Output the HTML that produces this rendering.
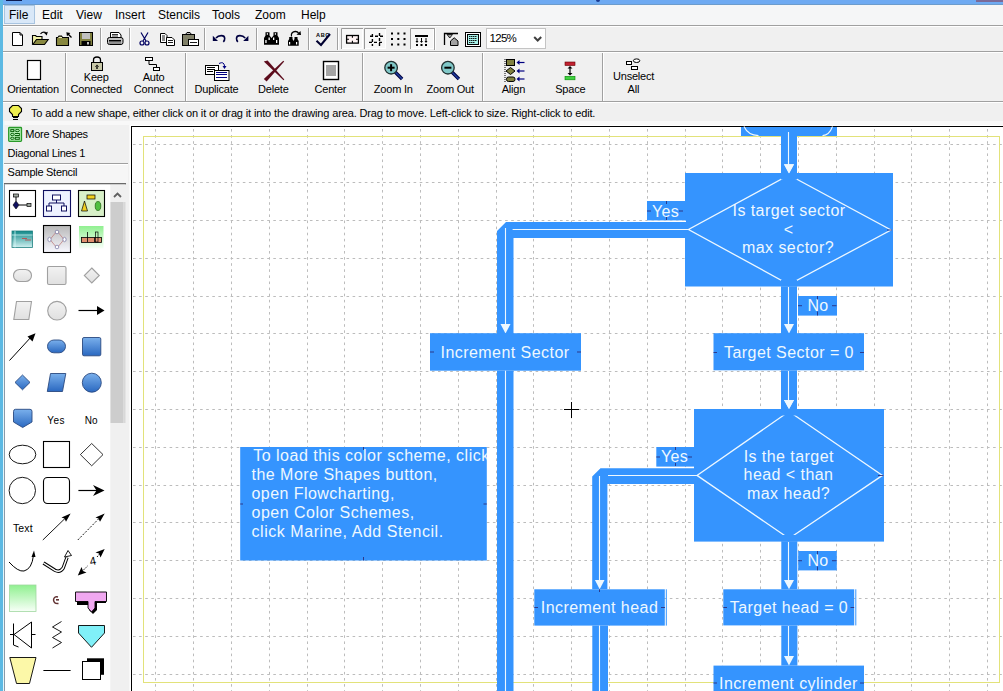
<!DOCTYPE html>
<html><head><meta charset="utf-8">
<style>
*{margin:0;padding:0;box-sizing:border-box}
html,body{width:1003px;height:691px;overflow:hidden;background:#f0f0f0;font-family:"Liberation Sans",sans-serif;color:#000}
.a{position:absolute}
.t{position:absolute;white-space:nowrap;font-size:12px;line-height:14px}
</style></head><body>
<!-- window frame -->
<div class="a" style="left:0;top:0;width:1003px;height:5px;background:#6eaaf2"></div>
<div class="a" style="left:0;top:4px;width:1003px;height:1px;background:#6c9ccc"></div>
<div class="a" style="left:976px;top:0;width:27px;height:2px;background:#7a6a98"></div>
<div class="a" style="left:596px;top:0;width:4px;height:2px;background:#1a3a90;border-radius:0 0 2px 2px"></div>
<div class="a" style="left:6px;top:0;width:16px;height:1px;background:#0a1a50"></div>
<div class="a" style="left:0;top:0;width:3px;height:691px;background:#5cb9e3"></div>
<!-- menu bar -->
<div class="a" style="left:3px;top:5px;width:1000px;height:20px;background:#f5f6f7"></div>
<div class="a" style="left:4px;top:5px;width:31px;height:19px;background:#d9e8f8;border:1px solid #a8c4e0"></div>
<div class="a" style="left:3px;top:25px;width:1000px;height:1px;background:#a0a0a0"></div>
<div class="a" style="left:3px;top:26px;width:1000px;height:1px;background:#ffffff"></div>
<div class="t" style="left:9px;top:8px">File</div>
<div class="t" style="left:42px;top:8px">Edit</div>
<div class="t" style="left:76px;top:8px">View</div>
<div class="t" style="left:115px;top:8px">Insert</div>
<div class="t" style="left:158px;top:8px">Stencils</div>
<div class="t" style="left:212px;top:8px">Tools</div>
<div class="t" style="left:255px;top:8px">Zoom</div>
<div class="t" style="left:301px;top:8px">Help</div>
<!-- toolbar 1 lines -->
<div class="a" style="left:3px;top:51px;width:1000px;height:1px;background:#a0a0a0"></div>
<div class="a" style="left:3px;top:52px;width:1000px;height:1px;background:#ffffff"></div>
<!-- toolbar 2 lines -->
<div class="a" style="left:3px;top:101px;width:1000px;height:1px;background:#a0a0a0"></div>
<div class="a" style="left:3px;top:102px;width:1000px;height:1px;background:#ffffff"></div>
<svg class="a" style="left:0;top:0" width="1003" height="125" viewBox="0 0 1003 125" font-family="Liberation Sans">
<rect x="100" y="28" width="1" height="22" fill="#a0a0a0"/><rect x="101" y="28" width="1" height="22" fill="#fff"/>
<rect x="129" y="28" width="1" height="22" fill="#a0a0a0"/><rect x="130" y="28" width="1" height="22" fill="#fff"/>
<rect x="204" y="28" width="1" height="22" fill="#a0a0a0"/><rect x="205" y="28" width="1" height="22" fill="#fff"/>
<rect x="256" y="28" width="1" height="22" fill="#a0a0a0"/><rect x="257" y="28" width="1" height="22" fill="#fff"/>
<rect x="308" y="28" width="1" height="22" fill="#a0a0a0"/><rect x="309" y="28" width="1" height="22" fill="#fff"/>
<rect x="337" y="28" width="1" height="22" fill="#a0a0a0"/><rect x="338" y="28" width="1" height="22" fill="#fff"/>
<rect x="434" y="28" width="1" height="22" fill="#a0a0a0"/><rect x="435" y="28" width="1" height="22" fill="#fff"/>
<rect x="341" y="28" width="22" height="21" fill="#f7f7f7"/>
<path d="M341.5,49 V28.5 H363" stroke="#9a9a9a" fill="none"/>
<path d="M342,48.5 H362.5 V29" stroke="#ffffff" fill="none"/>
<rect x="364" y="28" width="22" height="21" fill="#f7f7f7"/>
<path d="M364.5,49 V28.5 H386" stroke="#9a9a9a" fill="none"/>
<path d="M365,48.5 H385.5 V29" stroke="#ffffff" fill="none"/>
<rect x="410" y="28" width="24" height="21" fill="#f7f7f7"/>
<path d="M410.5,49 V28.5 H434" stroke="#9a9a9a" fill="none"/>
<path d="M411,48.5 H433.5 V29" stroke="#ffffff" fill="none"/>
<path d="M12.5,32.5 H20 L22.5,35 V45.5 H12.5 Z" fill="#fff" stroke="#000"/><path d="M20,32.5 V35 H22.5" fill="none" stroke="#000"/>
<path d="M32.5,44.5 V35.5 H35.5 L36.5,36.5 H42 V39.5" fill="#f0f0a8" stroke="#000" stroke-width="1.1"/>
<path d="M32.8,44.5 L36.5,39.5 H48.2 L44.5,44.5 Z" fill="#888840" stroke="#000" stroke-width="1.1"/>
<path d="M40.5,33.8 Q43,31.2 45.8,32.6" fill="none" stroke="#000" stroke-width="1.2"/><path d="M44.2,33 L47.8,31.8 L46.8,35.5 Z" fill="#000"/>
<path d="M56.5,45.5 V37.5 H58 L59,36 H61.5 L62.5,37.5 H68.5 V45.5 Z" fill="#888840" stroke="#000" stroke-width="1.1"/><rect x="58.5" y="37" width="3.5" height="1" fill="#f0f0c0"/>
<path d="M71.5,37.5 L67.8,33.8" stroke="#000" stroke-width="1.3" fill="none"/><path d="M66.3,32.3 L70.3,33 L67,36.3 Z" fill="#000"/>
<rect x="79.5" y="32.5" width="13" height="13" fill="#808040" stroke="#000"/><rect x="82" y="33" width="8" height="6" fill="#c0c0c0"/><rect x="81.5" y="41" width="9" height="4.5" fill="#000"/><rect x="87" y="42" width="2" height="2.5" fill="#c0c0c0"/>
<path d="M110.5,32.5 H119 L121,35 V37.5 H110.5 Z" fill="#fff" stroke="#000"/><path d="M112,34.5 H118 M112,36 H118" stroke="#000" stroke-width="0.8"/>
<rect x="107.5" y="37.5" width="15.5" height="7" rx="2" fill="#c0c0c0" stroke="#000"/><rect x="109" y="40" width="12" height="1.5" fill="#000"/><rect x="109" y="42.5" width="12" height="1" fill="#606060"/>
<path d="M141,32.5 L146,41 M148,32.5 L143,41" stroke="#000060" stroke-width="1.2" fill="none"/><circle cx="142" cy="43" r="2" fill="none" stroke="#000060" stroke-width="1.2"/><circle cx="147" cy="43" r="2" fill="none" stroke="#000060" stroke-width="1.2"/>
<path d="M160.5,33.5 H165 L167,35.5 V42.5 H160.5 Z" fill="#fff" stroke="#000"/><path d="M162,36 H165 M162,38 H165 M162,40 H165" stroke="#000" stroke-width="0.9"/>
<path d="M166.5,37.5 H172 L174.5,40 V45.5 H166.5 Z" fill="#fff" stroke="#000"/><path d="M168,40.5 H173 M168,42.5 H173" stroke="#000" stroke-width="0.9"/>
<rect x="182.5" y="34.5" width="12" height="11" fill="#808068" stroke="#000"/><path d="M185.5,34.5 L187,32.5 H190 L191.5,34.5 Z" fill="#c0c0c0" stroke="#000"/>
<rect x="188.5" y="39.5" width="10" height="6" fill="#fff" stroke="#000"/><path d="M190,42.5 H197" stroke="#000" stroke-width="0.9"/>
<path d="M216,38 C218.5,35 224.5,34.5 224.7,38.3 C224.8,39.8 224.2,41 223.3,41.8" fill="none" stroke="#000040" stroke-width="1.6"/><path d="M212.8,35.8 V41 H218 Z" fill="#000040"/>
<path d="M245.2,38 C242.7,35 236.7,34.5 236.5,38.3 C236.4,39.8 237,41 237.9,41.8" fill="none" stroke="#000040" stroke-width="1.6"/><path d="M248.4,35.8 V41 H243.2 Z" fill="#000040"/>
<path d="M264,44.7 V38 L265.5,35.5 V32.3 H269.5 V35.5 L271.5,38 V44.7 Z M271.5,44.7 V38 L273.5,35.5 V32.3 H277.5 V35.5 L279,38 V44.7 Z" fill="#000"/>
<rect x="265.3" y="40" width="1.3" height="3" fill="#fff"/><rect x="268.5" y="37.5" width="1.3" height="2.5" fill="#fff"/><rect x="273" y="37.5" width="1.3" height="2.5" fill="#fff"/><rect x="276" y="40" width="1.3" height="3" fill="#fff"/><rect x="266.8" y="33.2" width="1.2" height="1.5" fill="#fff"/><rect x="274.8" y="33.2" width="1.2" height="1.5" fill="#fff"/>
<path d="M288,45.7 V41 L289.2,39 V37 H292.5 V39 L293.5,41 V45.7 Z M293.5,45.7 V41 L294.5,39 V37 H297.5 V39 L298.7,41 V45.7 Z" fill="#000"/>
<rect x="289" y="42" width="1.2" height="2.5" fill="#fff"/><rect x="296" y="42" width="1.2" height="2.5" fill="#fff"/>
<path d="M291.5,36.5 C290.5,33.5 293,31.3 295.5,31.5 C297,31.6 298,32.3 298.5,33" fill="none" stroke="#000" stroke-width="1.3"/><path d="M296.5,34.8 L301,35 L300.5,31 Z" fill="#000"/>
<text x="316" y="36.6" font-size="5.6" font-weight="bold" letter-spacing="0.6" fill="#000">ABC</text>
<path d="M316.5,40.8 L321,45 L330,34" fill="none" stroke="#000030" stroke-width="2.1"/>
<rect x="346.6" y="35.5" width="11.8" height="7.6" fill="#fff4f4" stroke="#000" stroke-width="1.3"/><path d="M352.4,35.5 V37.8 M352.4,40.8 V43 M346.6,39.3 H349 M356,39.3 H358.4" stroke="#000" stroke-width="1.1"/>
<path d="M370,36.2 H372.5 M375,36.2 H378 M380,36.2 H383 M369,42.4 H372 M374,42.4 H377 M379,42.4 H382 M372.4,34 V37 M372.4,39 V42 M372.4,44 V46 M379.5,33 V36 M379.5,38 V41 M379.5,43 V46" stroke="#000" stroke-width="1.4" fill="none"/>
<rect x="391" y="32.5" width="2" height="2" fill="#000"/>
<rect x="397.3" y="32.5" width="2" height="2" fill="#000"/>
<rect x="403.5" y="32.5" width="2" height="2" fill="#000"/>
<rect x="391" y="38" width="2" height="2" fill="#000"/>
<rect x="397.3" y="38" width="2" height="2" fill="#000"/>
<rect x="403.5" y="38" width="2" height="2" fill="#000"/>
<rect x="391" y="43.5" width="2" height="2" fill="#000"/>
<rect x="397.3" y="43.5" width="2" height="2" fill="#000"/>
<rect x="403.5" y="43.5" width="2" height="2" fill="#000"/>
<rect x="415" y="35" width="13" height="2" fill="#000"/>
<path d="M417,38 V42" stroke="#000" stroke-width="1"/><path d="M415.5,41 L418.5,41 L417,43 Z" fill="#000"/><rect x="416" y="44" width="2" height="2" fill="#000"/>
<path d="M421.5,38 V42" stroke="#000" stroke-width="1"/><path d="M420.0,41 L423.0,41 L421.5,43 Z" fill="#000"/><rect x="420.5" y="44" width="2" height="2" fill="#000"/>
<path d="M426,38 V42" stroke="#000" stroke-width="1"/><path d="M424.5,41 L427.5,41 L426,43 Z" fill="#000"/><rect x="425" y="44" width="2" height="2" fill="#000"/>
<path d="M444.5,45 V33.5 H458" fill="none" stroke="#000" stroke-width="1.3"/><path d="M447,34.5 L452.5,34.5 L449.8,38 Z" fill="#a0a0a0" stroke="#000" stroke-width="0.8"/><path d="M450.5,45.5 V41 L454.2,37.8 L458,41 V45.5 Z" fill="#a0a0a0" stroke="#000" stroke-width="1"/>
<rect x="465.5" y="32.5" width="15" height="14" fill="#fff" stroke="#000"/><rect x="467.5" y="34.5" width="11" height="10" fill="#a8f0e8" stroke="#000" stroke-width="1"/><path d="M469,36.5 H477 M469,38.5 H477 M469,40.5 H477 M469,42.5 H475" stroke="#000" stroke-width="0.9" stroke-dasharray="1.5 0.5"/>
<rect x="486.5" y="28.5" width="59" height="20" fill="#fff" stroke="#c4c4c4"/>
<text x="489.5" y="41.8" font-size="11.5" text-anchor="start" letter-spacing="-0.7" fill="#000">125%</text>
<path d="M534.2,37 L537.7,40.5 L541.2,37" fill="none" stroke="#404040" stroke-width="2"/>
<rect x="65" y="53" width="1" height="48" fill="#a0a0a0"/><rect x="66" y="53" width="1" height="48" fill="#fff"/>
<rect x="185" y="53" width="1" height="48" fill="#a0a0a0"/><rect x="186" y="53" width="1" height="48" fill="#fff"/>
<rect x="362" y="53" width="1" height="48" fill="#a0a0a0"/><rect x="363" y="53" width="1" height="48" fill="#fff"/>
<rect x="482" y="53" width="1" height="48" fill="#a0a0a0"/><rect x="483" y="53" width="1" height="48" fill="#fff"/>
<rect x="602" y="53" width="1" height="48" fill="#a0a0a0"/><rect x="603" y="53" width="1" height="48" fill="#fff"/>
<rect x="27.5" y="60.5" width="13" height="19" fill="#fff" stroke="#000" stroke-width="1.2"/>
<text x="33" y="92.8" font-size="11" text-anchor="middle" letter-spacing="-0.2" fill="#000">Orientation</text>
<path d="M93.5,63 V60 Q93.5,57 97,57 Q100.5,57 100.5,60 V63" fill="none" stroke="#000" stroke-width="1.3"/>
<rect x="91.5" y="62.5" width="11" height="8" fill="#c8c8a8" stroke="#000"/><path d="M97,64.5 L95,67 H99 Z M96.3,66.5 H97.7 V69 H96.3 Z" fill="#000"/>
<text x="96.2" y="81.4" font-size="11" text-anchor="middle" letter-spacing="-0.2" fill="#000">Keep</text>
<text x="96.2" y="92.7" font-size="11" text-anchor="middle" letter-spacing="-0.2" fill="#000">Connected</text>
<rect x="145.5" y="57.5" width="7" height="3" fill="#fff" stroke="#000"/><rect x="153.5" y="67.5" width="6" height="3" fill="#fff" stroke="#000"/><path d="M149,61 V64.5 H156.5 V67.5" fill="none" stroke="#000"/>
<text x="153.6" y="81.4" font-size="11" text-anchor="middle" letter-spacing="-0.2" fill="#000">Auto</text>
<text x="153.6" y="92.7" font-size="11" text-anchor="middle" letter-spacing="-0.2" fill="#000">Connect</text>
<rect x="205.5" y="65.5" width="13" height="9" fill="#fff" stroke="#000"/><path d="M207,67.5 H215 M207,69.5 H215 M207,71.5 H213" stroke="#000" stroke-width="1"/>
<rect x="214.5" y="70.5" width="14.5" height="10" fill="#fff" stroke="#000"/><path d="M216,72.5 H227 M216,74.5 H227 M216,77.5 H227" stroke="#000080" stroke-width="1"/>
<path d="M219,63.5 Q224,61 224.5,66" fill="none" stroke="#000080"/><path d="M222.5,66 L226.5,66 L224.5,69 Z" fill="#000080"/>
<text x="216.5" y="92.7" font-size="11" text-anchor="middle" letter-spacing="-0.2" fill="#000">Duplicate</text>
<path d="M263.8,61.6 L267.6,60.6 L284.3,79.5 L283.5,80.3 Z" fill="#5c0c1c"/><path d="M263.8,79 L266.6,81.6 L284.2,61.6 L283.3,60.8 Z" fill="#5c0c1c"/>
<text x="273.3" y="92.7" font-size="11" text-anchor="middle" letter-spacing="-0.2" fill="#000">Delete</text>
<rect x="323.5" y="61.5" width="15" height="18" fill="#fff" stroke="#000" stroke-width="1.4"/><rect x="326" y="65" width="10" height="11" fill="#a4a4a4"/>
<text x="330.4" y="92.7" font-size="11" text-anchor="middle" letter-spacing="-0.2" fill="#000">Center</text>
<path d="M395.1,72 L402.1,79" stroke="#000040" stroke-width="3.4"/><path d="M395.1,72 L402.1,79" stroke="#2040a0" stroke-width="1.4"/>
<circle cx="391.1" cy="67.7" r="6.3" fill="#80c8c8" stroke="#203030" stroke-width="1.3"/>
<path d="M387.6,67.7 H394.6" stroke="#000" stroke-width="2"/>
<path d="M391.1,64.2 V71.2" stroke="#000" stroke-width="2"/>
<path d="M451.9,72 L458.9,79" stroke="#000040" stroke-width="3.4"/><path d="M451.9,72 L458.9,79" stroke="#2040a0" stroke-width="1.4"/>
<circle cx="447.9" cy="67.7" r="6.3" fill="#80c8c8" stroke="#203030" stroke-width="1.3"/>
<path d="M444.4,67.7 H451.4" stroke="#000" stroke-width="2"/>
<text x="393.3" y="92.7" font-size="11" text-anchor="middle" letter-spacing="-0.2" fill="#000">Zoom In</text>
<text x="450.2" y="92.7" font-size="11" text-anchor="middle" letter-spacing="-0.2" fill="#000">Zoom Out</text>
<path d="M505,59 V82" stroke="#000" stroke-dasharray="1 1"/>
<rect x="506.5" y="59.5" width="8" height="6" fill="#808040" stroke="#000"/><path d="M510.5,67.5 L515,71 L510.5,74.5 L506,71 Z" fill="#808040" stroke="#000"/><rect x="506.5" y="77" width="8.5" height="4.5" rx="2" fill="#808040" stroke="#000"/>
<path d="M518,62.5 H524.5" stroke="#000080" stroke-width="1.2"/><path d="M516.5,62.5 L519.5,60.0 V65.0 Z" fill="#000080"/>
<path d="M518,71 H524.5" stroke="#000080" stroke-width="1.2"/><path d="M516.5,71 L519.5,68.5 V73.5 Z" fill="#000080"/>
<path d="M518,79 H524.5" stroke="#000080" stroke-width="1.2"/><path d="M516.5,79 L519.5,76.5 V81.5 Z" fill="#000080"/>
<text x="513.4" y="92.7" font-size="11" text-anchor="middle" letter-spacing="-0.2" fill="#000">Align</text>
<rect x="565" y="62" width="10" height="3.5" fill="#c02030" stroke="#600" stroke-width="0.6"/><rect x="565" y="76.3" width="10" height="3.5" fill="#40d040" stroke="#080" stroke-width="0.6"/>
<path d="M570,67.5 V74" stroke="#000" stroke-width="1.2"/><path d="M567.5,68.5 L570,66 L572.5,68.5 Z M567.5,73 L570,75.5 L572.5,73 Z" fill="#000"/>
<text x="570.3" y="92.7" font-size="11" text-anchor="middle" letter-spacing="-0.2" fill="#000">Space</text>
<rect x="626.5" y="61.5" width="5" height="3" fill="#fff" stroke="#000"/><ellipse cx="636.6" cy="60.7" rx="3.2" ry="1.8" fill="#fff" stroke="#000"/><rect x="631.5" y="66.5" width="6" height="3" fill="#fff" stroke="#000"/>
<text x="633.6" y="80.3" font-size="11" text-anchor="middle" letter-spacing="-0.2" fill="#000">Unselect</text>
<text x="633.4" y="92.5" font-size="11" text-anchor="middle" letter-spacing="-0.2" fill="#000">All</text>
<path d="M12.5,105.5 H18.5 L21.5,108.5 V111.5 L18.5,114.5 V116.5 H12.5 V114.5 L9.5,111.5 V108.5 Z" fill="#eeee50" stroke="#000" stroke-width="1.1"/>
<path d="M13,117.5 H18 M13,119.5 H18" stroke="#000" stroke-width="1.2"/><path d="M13.5,118.5 H17.5" stroke="#e0e0e0" stroke-width="0.8"/>
</svg>
<!-- hint -->
<div class="a" style="left:3px;top:121px;width:1000px;height:5px;background:#f8f8f8"></div>
<div class="t" style="left:31px;top:106px;font-size:11px;letter-spacing:-0.14px">To add a new shape, either click on it or drag it into the drawing area. Drag to move. Left-click to size. Right-click to edit.</div>

<svg class="a" style="left:0;top:0" width="131" height="691" viewBox="0 0 131 691" font-family="Liberation Sans">
<rect x="3" y="121" width="128" height="4" fill="#f8f8f8"/>
<rect x="3" y="125" width="127" height="566" fill="#f0f0f0"/>
<rect x="3" y="121" width="1.5" height="570" fill="#e4f6fc"/>
<rect x="4" y="163" width="124" height="1" fill="#a0a0a0"/><rect x="4" y="164" width="124" height="1" fill="#fff"/>
<rect x="4" y="165" width="124" height="18" fill="#f6f6f6"/>
<rect x="4" y="183" width="122" height="1.5" fill="#6a6a6a"/>
<rect x="4" y="184" width="1" height="507" fill="#8a9aa8"/>
<rect x="5" y="184.5" width="105.5" height="507" fill="#fff"/>
<rect x="110.5" y="184.5" width="15" height="507" fill="#f0f0f0"/>
<rect x="129" y="121" width="2" height="570" fill="#f8f8f8"/>
<path d="M114,197 L117.5,193.5 L121,197" fill="none" stroke="#606060" stroke-width="1.8"/>
<rect x="110.5" y="202" width="13" height="221" fill="#cdcdcd"/><rect x="123.5" y="202" width="2" height="221" fill="#d8d8d8"/>
<rect x="8.7" y="127.5" width="12.8" height="13.8" rx="0.8" fill="#b4f0b4" stroke="#2a9a2a" stroke-width="1.3"/>
<rect x="10.8" y="129.6" width="3" height="2" fill="none" stroke="#0a600a" stroke-width="1"/><ellipse cx="17.3" cy="130.6" rx="2.2" ry="1.1" fill="none" stroke="#0a600a" stroke-width="1"/>
<ellipse cx="12.3" cy="134.5" rx="1.8" ry="1.1" fill="none" stroke="#0a600a" stroke-width="1"/><rect x="15.3" y="133.5" width="4" height="2" fill="none" stroke="#0a600a" stroke-width="1"/>
<ellipse cx="12.3" cy="138.3" rx="1.8" ry="1.1" fill="none" stroke="#0a600a" stroke-width="1"/><rect x="15.3" y="137.3" width="4" height="2" fill="none" stroke="#0a600a" stroke-width="1"/>
<text x="25.3" y="137.7" font-size="11" text-anchor="start" letter-spacing="-0.27" fill="#000">More Shapes</text>
<text x="7.6" y="156.5" font-size="11" text-anchor="start" letter-spacing="-0.27" fill="#000">Diagonal Lines 1</text>
<text x="7.6" y="175.5" font-size="11" text-anchor="start" letter-spacing="-0.27" fill="#000">Sample Stencil</text>
<rect x="9.5" y="190.5" width="26" height="26" fill="#fff" stroke="#000" stroke-width="1.1"/>
<rect x="13.5" y="194" width="5" height="3" fill="#a0a8a0" stroke="#000" stroke-width="0.7"/><path d="M16,197 V201" stroke="#000"/><path d="M16,201 L19,205 L16,209 L13,205 Z" fill="#101060" stroke="#000" stroke-width="0.6"/><path d="M19,205 H27" stroke="#000"/><rect x="27" y="203.5" width="4" height="3" fill="#a0a8a0" stroke="#000" stroke-width="0.7"/>
<rect x="43.5" y="190.5" width="27" height="26" fill="#eef2ff" stroke="#101060" stroke-width="1.1"/>
<rect x="52.5" y="195" width="8" height="5" fill="#fff" stroke="#101060"/><path d="M56.5,200 V203 M49,206 V203 H64 V206" fill="none" stroke="#101060"/><rect x="46.5" y="206" width="5" height="5" fill="#fff" stroke="#101060"/><rect x="61.5" y="206" width="5" height="5" fill="#fff" stroke="#101060"/>
<rect x="78.5" y="190.5" width="26" height="26" fill="#d8f0c8" stroke="#000" stroke-width="1.1"/>
<rect x="87" y="195" width="8" height="4" fill="#f0d020" stroke="#000" stroke-width="0.7"/><path d="M84.5,201 L87.5,211 H81.5 Z" fill="#f0d020" stroke="#000" stroke-width="0.7"/><ellipse cx="98" cy="206" rx="2.8" ry="4.5" fill="#50c040" stroke="#206010" stroke-width="0.7"/>
<defs><linearGradient id="tg" x1="0" y1="0" x2="0" y2="1"><stop offset="0" stop-color="#108888"/><stop offset="1" stop-color="#d0f0f0"/></linearGradient><linearGradient id="gg" x1="0" y1="0" x2="0" y2="1"><stop offset="0" stop-color="#b8b8b8"/><stop offset="1" stop-color="#f8f8ff"/></linearGradient><linearGradient id="lg" x1="0" y1="0" x2="0" y2="1"><stop offset="0" stop-color="#90f090"/><stop offset="1" stop-color="#f8fff8"/></linearGradient><linearGradient id="bg" x1="0" y1="0" x2="0" y2="1"><stop offset="0" stop-color="#7ab0ec"/><stop offset="1" stop-color="#2a68c0"/></linearGradient><linearGradient id="gsh" x1="0" y1="0" x2="0" y2="1"><stop offset="0" stop-color="#f2f2f2"/><stop offset="1" stop-color="#e0e0e0"/></linearGradient></defs>
<rect x="12" y="231" width="20.5" height="16.5" fill="url(#tg)" stroke="#208080" stroke-width="0.8"/><path d="M12,235 H32.5 M15,231 V247.5" stroke="#e0ffff" stroke-width="0.7"/><path d="M22,238.5 H27 M25,240 H31" stroke="#c04040" stroke-width="0.8"/>
<rect x="43.5" y="225.5" width="27" height="27" fill="url(#gg)" stroke="#000" stroke-width="1.1"/><path d="M57,231 L64,239.5 L57,248 L50,239.5 Z" fill="none" stroke="#c08080" stroke-width="0.8"/><circle cx="57" cy="232" r="1.8" fill="#fff" stroke="#404080" stroke-width="0.5"/><circle cx="57" cy="247" r="1.8" fill="#fff" stroke="#404080" stroke-width="0.5"/><ellipse cx="49.5" cy="239.5" rx="1.6" ry="2.2" fill="#fff" stroke="#404080" stroke-width="0.5"/><ellipse cx="64.5" cy="239.5" rx="1.6" ry="2.2" fill="#fff" stroke="#404080" stroke-width="0.5"/>
<rect x="79" y="226" width="24.5" height="22.5" fill="url(#lg)"/><rect x="81.5" y="237.5" width="20" height="5" fill="#e09070" stroke="#000" stroke-width="0.8"/><path d="M87.5,232 V242 M94.5,242 V237.5" stroke="#000" stroke-width="0.8"/><rect x="95.5" y="232" width="2.5" height="10" fill="none" stroke="#000" stroke-width="0.7"/>
<rect x="13.5" y="269.5" width="18" height="12" rx="6" fill="url(#gsh)" stroke="#a0a0a0" stroke-width="1.1"/>
<rect x="47.5" y="266.5" width="18.5" height="18" rx="1.5" fill="url(#gsh)" stroke="#a0a0a0" stroke-width="1.1"/>
<path d="M91.8,268 L99.3,275.5 L91.8,283 L84.3,275.5 Z" fill="url(#gsh)" stroke="#a0a0a0" stroke-width="1.1"/>
<path d="M16.5,301.5 H31.5 L28.8,319.5 H13.8 Z" fill="url(#gsh)" stroke="#a0a0a0" stroke-width="1.1"/>
<circle cx="57" cy="310.7" r="9.3" fill="url(#gsh)" stroke="#a0a0a0" stroke-width="1.1"/>
<path d="M78.5,310.5 H98" stroke="#000" stroke-width="1.2"/><path d="M97,306 L104.5,310.5 L97,315 Z" fill="#000"/>
<path d="M9.5,360.5 L32,336" stroke="#000" stroke-width="1"/><path d="M35.5,333.3 L27.5,336.5 L32.5,341.5 Z" fill="#000"/>
<rect x="47.5" y="340" width="18" height="12.8" rx="6.4" fill="url(#bg)" stroke="#2a4a80" stroke-width="0.9"/>
<rect x="82.5" y="337.5" width="18.3" height="18.3" rx="1.5" fill="url(#bg)" stroke="#2a4a80" stroke-width="0.9"/>
<path d="M22.5,375 L30,382.4 L22.5,389.8 L15,382.4 Z" fill="url(#bg)" stroke="#2a4a80" stroke-width="0.9"/>
<path d="M50.5,373.5 H65.8 L62.5,391.5 H47.3 Z" fill="url(#bg)" stroke="#2a4a80" stroke-width="0.9"/>
<circle cx="91.8" cy="382.7" r="9.5" fill="url(#bg)" stroke="#2a4a80" stroke-width="0.9"/>
<path d="M13.5,411.5 Q13.5,409.3 15.5,409.3 H30 Q32,409.3 32,411.5 V422 L22.7,427.5 L13.5,422 Z" fill="url(#bg)" stroke="#2a4a80" stroke-width="0.9"/>
<text x="47.2" y="424" font-size="10" text-anchor="start" letter-spacing="0.5" fill="#000">Yes</text>
<text x="84.8" y="424" font-size="10" text-anchor="start" letter-spacing="0.1" fill="#000">No</text>
<ellipse cx="22.5" cy="454.5" rx="13.3" ry="9.3" fill="#fff" stroke="#000" stroke-width="0.9"/>
<rect x="43.5" y="441.5" width="26" height="26" fill="#fff" stroke="#000" stroke-width="1.1"/>
<path d="M91.7,443.5 L103,454.6 L91.7,465.8 L80.4,454.6 Z" fill="#fff" stroke="#000" stroke-width="0.8"/>
<circle cx="22.3" cy="490.5" r="13.2" fill="#fff" stroke="#000" stroke-width="0.9"/>
<rect x="43.5" y="477.5" width="26" height="26" rx="4" fill="#fff" stroke="#000" stroke-width="1.1"/>
<path d="M78.4,490.5 H100" stroke="#000" stroke-width="1.2"/><path d="M104.5,490.5 L93,485 L96.5,490.5 L93,496 Z" fill="#000"/>
<text x="13" y="532" font-size="10.5" text-anchor="start" letter-spacing="0.1" fill="#000">Text</text>
<path d="M42.8,540 L66,517.5" stroke="#000" stroke-width="0.9"/><path d="M70.6,513.4 L61.5,517.5 L64.5,518.5 L66,521.8 Z" fill="#000"/>
<path d="M77.8,540 L100,517.5" stroke="#000" stroke-width="0.9" stroke-dasharray="2 1.5"/><path d="M104.7,513.4 L95.5,517.5 L98.5,518.5 L100,521.8 Z" fill="#000"/>
<path d="M9,562 Q18,572 24,571 Q32,569 33.5,555" fill="none" stroke="#000" stroke-width="1"/><path d="M34,550.5 L31.5,557 L35.5,557 Z" fill="#000"/>
<path d="M43.5,563 L55,570.3 Q60,572.8 63.2,568 L67,557.5" fill="none" stroke="#000" stroke-width="3.4"/><path d="M43.5,563 L55,570.3 Q60,572.8 63.2,568 L67,557.5" fill="none" stroke="#fff" stroke-width="1.4"/>
<path d="M64.5,557 L68,550.5 L71.5,555.5 Z" fill="#fff" stroke="#000" stroke-width="0.9"/>
<path d="M81.5,572 L87.5,566 M97,557 L100.5,553" stroke="#000" stroke-width="0.9" stroke-dasharray="1.5 1"/><path d="M104.7,549 L95.5,552.5 L99,553.5 L100.5,557.5 Z M77.8,575.6 L86.5,572.5 L83,571 L81.5,567 Z" fill="#000"/>
<text x="0" y="0" font-size="11.5" transform="translate(90.5,565.5) rotate(-12)" fill="#000">4</text>
<rect x="9.5" y="585" width="26.5" height="26.5" fill="url(#lg)" stroke="#a0d8a0" stroke-width="0.8"/>
<path d="M58,597 Q54,596 53.5,600 Q54,604 58.5,603.5" fill="none" stroke="#603030" stroke-width="1.5"/><rect x="56" y="599" width="3" height="1.6" fill="#603030"/>
<path d="M77,594 H106 V603 H97 V610 L93,614 L89,610 V605 H77 Z" fill="#000"/><path d="M75.5,592 H106.5 V601.5 H95 V608 L91.5,612 L88,608 V601.5 H75.5 Z" fill="#f0a8f0" stroke="#000" stroke-width="0.9"/>
<path d="M10,634.5 H14 M13.5,623.5 V645 L18.5,647 M31.5,622 V648 L14,634.5 L31.5,622 M31.5,634.5 H35.5" fill="none" stroke="#000" stroke-width="1"/>
<path d="M61.5,621.5 L52.5,627 L61.5,632 L52.5,637.5 L61.5,642.5 L52.5,648" fill="none" stroke="#000" stroke-width="0.9"/>
<path d="M78.5,625.5 H104.5 V633 L91.5,647.3 L78.5,633 Z" fill="#80f0f8" stroke="#000" stroke-width="0.9"/>
<path d="M9.8,657.5 H36 L29.5,683.5 H16.5 Z" fill="#fcf8a8" stroke="#000" stroke-width="0.9"/>
<path d="M43.4,670.5 H70.6" stroke="#000" stroke-width="1"/>
<rect x="87" y="658.3" width="17" height="16.5" fill="#000"/><rect x="82.5" y="661.5" width="18" height="18" fill="#fff" stroke="#000" stroke-width="1"/>
</svg>
<!-- canvas -->
<svg class="a" style="left:130px;top:125px" width="873" height="566" viewBox="130 125 873 566" font-family="Liberation Sans">
<rect x="130" y="125" width="873" height="566" fill="#fff"/>
<rect x="131" y="126" width="872" height="1" fill="#000"/><rect x="131" y="126" width="1" height="565" fill="#000"/>
<path d="M155.5 128V691 M193.5 128V691 M231.5 128V691 M269.5 128V691 M307.5 128V691 M344.5 128V691 M382.5 128V691 M420.5 128V691 M458.5 128V691 M496.5 128V691 M533.5 128V691 M571.5 128V691 M609.5 128V691 M647.5 128V691 M685.5 128V691 M722.5 128V691 M760.5 128V691 M798.5 128V691 M836.5 128V691 M874.5 128V691 M911.5 128V691 M949.5 128V691 M987.5 128V691 M132 144.5H1003 M132 182.5H1003 M132 220.5H1003 M132 258.5H1003 M132 296.5H1003 M132 333.5H1003 M132 371.5H1003 M132 409.5H1003 M132 447.5H1003 M132 485.5H1003 M132 522.5H1003 M132 560.5H1003 M132 598.5H1003 M132 636.5H1003 M132 674.5H1003" stroke="#bcbcbc" stroke-width="1" stroke-dasharray="2.6 3.5" stroke-dashoffset="-1" fill="none"/>
<rect x="143.5" y="136.5" width="856" height="546" fill="none" stroke="#e2e27a" stroke-width="1"/>
<rect x="741" y="127" width="96.00" height="9.00" fill="#3594fe"/>
<path d="M744,126.5 C746.5,132 751,135.3 758.5,135.6 M822.5,135.6 C828,135.3 830.5,132 832.5,126.5" fill="none" stroke="#eef8ff" stroke-width="1.1"/>
<rect x="781" y="127" width="16.00" height="46.00" fill="#3594fe"/>
<line x1="788.5" y1="132" x2="788.5" y2="165" stroke="#eef8ff" stroke-width="1.1"/>
<polygon points="784,164.3 794,164.3 789,173.5" fill="#eef8ff"/>
<rect x="685" y="173" width="208.00" height="113.50" fill="#3594fe"/>
<polygon points="789,175 891,230 789,284.5 688.5,229.5" fill="none" stroke="#eef8ff" stroke-width="1.3"/>
<text x="789" y="215.8" text-anchor="middle" font-size="16" letter-spacing="0.45" fill="#eef8ff">Is target sector</text>
<text x="788.5" y="234.5" text-anchor="middle" font-size="16" letter-spacing="0" fill="#eef8ff">&lt;</text>
<text x="788" y="252.8" text-anchor="middle" font-size="16" letter-spacing="0.45" fill="#eef8ff">max sector?</text>
<rect x="781" y="173" width="16.00" height="6.50" fill="#3594fe"/>
<polygon points="784,164.3 794,164.3 789,173.5" fill="#eef8ff"/>
<rect x="781" y="280" width="16.00" height="6.50" fill="#3594fe"/>
<rect x="647" y="201" width="38.00" height="19.60" fill="#3594fe"/>
<rect x="647" y="220.6" width="39.00" height="1.40" fill="#fff"/>
<text x="665.5" y="216.7" text-anchor="middle" font-size="16" letter-spacing="0.3" fill="#eef8ff">Yes</text>
<path d="M506,222 L686,222 L686,238 L513.5,238 L513.5,334 L497,334 L497,231 Z" fill="#3594fe"/>
<line x1="512.6" y1="229.5" x2="689" y2="229.5" stroke="#eef8ff" stroke-width="1.1"/>
<line x1="505.5" y1="228" x2="505.5" y2="325" stroke="#eef8ff" stroke-width="1.1"/>
<polygon points="500.5,324 510.5,324 505.5,333.5" fill="#eef8ff"/>
<rect x="430" y="333.2" width="151.00" height="37.50" fill="#3594fe"/>
<text x="505" y="357.6" text-anchor="middle" font-size="16" letter-spacing="0.45" fill="#eef8ff">Increment Sector</text>
<rect x="497" y="370.7" width="16.50" height="320.30" fill="#3594fe"/>
<line x1="505.5" y1="370.7" x2="505.5" y2="691" stroke="#eef8ff" stroke-width="1.1"/>
<rect x="781" y="286.5" width="16.00" height="47.50" fill="#3594fe"/>
<line x1="788.5" y1="287" x2="788.5" y2="325" stroke="#eef8ff" stroke-width="1.1"/>
<polygon points="784,324 794,324 789,333.5" fill="#eef8ff"/>
<rect x="798" y="296" width="39.00" height="19.60" fill="#3594fe"/>
<text x="818" y="310.8" text-anchor="middle" font-size="16" letter-spacing="0.3" fill="#eef8ff">No</text>
<rect x="713.5" y="333.2" width="150.50" height="37.10" fill="#3594fe"/>
<text x="789" y="357.7" text-anchor="middle" font-size="16" letter-spacing="0.45" fill="#eef8ff">Target Sector = 0</text>
<rect x="781" y="370.3" width="16.00" height="38.70" fill="#3594fe"/>
<line x1="788.5" y1="371" x2="788.5" y2="401" stroke="#eef8ff" stroke-width="1.1"/>
<polygon points="784,400 794,400 789,409" fill="#eef8ff"/>
<rect x="694" y="409" width="190.00" height="132.60" fill="#3594fe"/>
<polygon points="789,411.5 882.5,475.4 789,538.5 697,475.4" fill="none" stroke="#eef8ff" stroke-width="1.3"/>
<text x="788.8" y="461.8" text-anchor="middle" font-size="16" letter-spacing="0.45" fill="#eef8ff">Is the target</text>
<text x="788.5" y="480.1" text-anchor="middle" font-size="16" letter-spacing="0.45" fill="#eef8ff">head &lt; than</text>
<text x="788.6" y="498.6" text-anchor="middle" font-size="16" letter-spacing="0.45" fill="#eef8ff">max head?</text>
<rect x="781" y="409" width="16.00" height="6.50" fill="#3594fe"/>
<polygon points="784,400 794,400 789,409" fill="#eef8ff"/>
<rect x="781.3" y="535" width="16.00" height="6.60" fill="#3594fe"/>
<rect x="656.3" y="447" width="37.70" height="19.60" fill="#3594fe"/>
<text x="674.6" y="462" text-anchor="middle" font-size="16" letter-spacing="0.3" fill="#eef8ff">Yes</text>
<path d="M600.5,468.3 L695,468.3 L695,484 L607.4,484 L607.4,589.3 L592.2,589.3 L592.2,476.5 Z" fill="#3594fe"/>
<line x1="608" y1="475.5" x2="697" y2="475.5" stroke="#eef8ff" stroke-width="1.1"/>
<line x1="599.5" y1="476" x2="599.5" y2="581" stroke="#eef8ff" stroke-width="1.1"/>
<polygon points="594.9000000000001,580 604.5,580 599.7,589.3" fill="#eef8ff"/>
<rect x="798.2" y="551" width="38.60" height="19.40" fill="#3594fe"/>
<text x="818" y="565.7" text-anchor="middle" font-size="16" letter-spacing="0.3" fill="#eef8ff">No</text>
<rect x="781.3" y="541.6" width="16.00" height="47.70" fill="#3594fe"/>
<line x1="788.5" y1="542" x2="788.5" y2="581" stroke="#eef8ff" stroke-width="1.1"/>
<polygon points="784,580 794,580 789,589.3" fill="#eef8ff"/>
<rect x="534.3" y="589.3" width="130.50" height="36.30" fill="#3594fe"/>
<rect x="665.8" y="589.3" width="1.00" height="36.30" fill="#3594fe"/>
<text x="599.5" y="612.6" text-anchor="middle" font-size="16" letter-spacing="0.45" fill="#eef8ff">Increment head</text>
<rect x="592.3" y="625.6" width="15.70" height="65.40" fill="#3594fe"/>
<line x1="599.5" y1="625.6" x2="599.5" y2="691" stroke="#eef8ff" stroke-width="1.1"/>
<rect x="723.3" y="589.3" width="130.90" height="36.10" fill="#3594fe"/>
<rect x="855.3" y="589.3" width="1.00" height="36.10" fill="#3594fe"/>
<text x="789" y="612.7" text-anchor="middle" font-size="16" letter-spacing="0.45" fill="#eef8ff">Target head = 0</text>
<rect x="781.3" y="625.4" width="16.10" height="40.20" fill="#3594fe"/>
<line x1="788.5" y1="626" x2="788.5" y2="657" stroke="#eef8ff" stroke-width="1.1"/>
<polygon points="784,656 794,656 789,665.6" fill="#eef8ff"/>
<rect x="713.5" y="665.6" width="150.50" height="34.40" fill="#3594fe"/>
<text x="788.5" y="689" text-anchor="middle" font-size="16" letter-spacing="0.45" fill="#eef8ff">Increment cylinder</text>
<clipPath id="nc"><rect x="240.2" y="447" width="246.6" height="113.5"/></clipPath>
<rect x="240.2" y="447" width="246.60" height="113.50" fill="#3594fe"/>
<g clip-path="url(#nc)">
<text x="253.2" y="460.7" text-anchor="start" font-size="16" letter-spacing="0.5" fill="#eef8ff">To load this color scheme, click</text>
<text x="251.5" y="479.68" text-anchor="start" font-size="16" letter-spacing="0.48" fill="#eef8ff">the More Shapes button,</text>
<text x="251.5" y="498.65999999999997" text-anchor="start" font-size="16" letter-spacing="0.45" fill="#eef8ff">open Flowcharting,</text>
<text x="251.5" y="517.64" text-anchor="start" font-size="16" letter-spacing="0.49" fill="#eef8ff">open Color Schemes,</text>
<text x="251.5" y="536.62" text-anchor="start" font-size="16" letter-spacing="0.55" fill="#eef8ff">click Marine, Add Stencil.</text>
</g>
<rect x="647" y="210.5" width="4" height="1" fill="#2a2a78" opacity="0.85"/>
<rect x="679" y="210.5" width="4" height="1" fill="#2a2a78" opacity="0.85"/>
<rect x="666.0" y="201" width="1" height="3" fill="#2a2a78" opacity="0.85"/>
<rect x="666.0" y="217" width="1" height="3" fill="#2a2a78" opacity="0.85"/>
<rect x="656.3" y="456.5" width="3.7000000000000455" height="1" fill="#2a2a78" opacity="0.85"/>
<rect x="688" y="456.5" width="4" height="1" fill="#2a2a78" opacity="0.85"/>
<rect x="675.0" y="447" width="1" height="3" fill="#2a2a78" opacity="0.85"/>
<rect x="675.0" y="463" width="1" height="3" fill="#2a2a78" opacity="0.85"/>
<rect x="798" y="305.2" width="4" height="1" fill="#2a2a78" opacity="0.85"/>
<rect x="832" y="305.2" width="4.5" height="1" fill="#2a2a78" opacity="0.85"/>
<rect x="817.0" y="296" width="1" height="3.5" fill="#2a2a78" opacity="0.85"/>
<rect x="817.0" y="311.5" width="1" height="4.0" fill="#2a2a78" opacity="0.85"/>
<rect x="798.2" y="560.2" width="3.7999999999999545" height="1" fill="#2a2a78" opacity="0.85"/>
<rect x="832" y="560.2" width="4.5" height="1" fill="#2a2a78" opacity="0.85"/>
<rect x="817.0" y="551" width="1" height="3.5" fill="#2a2a78" opacity="0.85"/>
<rect x="817.0" y="566.5" width="1" height="3.8999999999999773" fill="#2a2a78" opacity="0.85"/>
<rect x="430" y="351.5" width="4" height="1" fill="#2a2a78" opacity="0.85"/>
<rect x="577" y="351.5" width="4" height="1" fill="#2a2a78" opacity="0.85"/>
<rect x="713.5" y="352.0" width="3.5" height="1" fill="#2a2a78" opacity="0.85"/>
<rect x="860" y="352.0" width="4" height="1" fill="#2a2a78" opacity="0.85"/>
<rect x="887" y="229.5" width="5" height="1" fill="#2a2a78" opacity="0.85"/>
<rect x="878" y="475.0" width="5.5" height="1" fill="#2a2a78" opacity="0.85"/>
<rect x="240.2" y="503.5" width="2.8000000000000114" height="1" fill="#2a2a78" opacity="0.85"/>
<rect x="483.5" y="503.5" width="3.3000000000000114" height="1" fill="#2a2a78" opacity="0.85"/>
<rect x="363.0" y="447" width="1" height="3" fill="#2a2a78" opacity="0.85"/>
<rect x="363.0" y="557" width="1" height="3.5" fill="#2a2a78" opacity="0.85"/>
<rect x="534.3" y="607.0" width="3.7000000000000455" height="1" fill="#2a2a78" opacity="0.85"/>
<rect x="661" y="607.0" width="4" height="1" fill="#2a2a78" opacity="0.85"/>
<rect x="599.0" y="589.3" width="1" height="2.7000000000000455" fill="#2a2a78" opacity="0.85"/>
<rect x="723.3" y="607.0" width="3.7000000000000455" height="1" fill="#2a2a78" opacity="0.85"/>
<rect x="850.5" y="607.0" width="3.7000000000000455" height="1" fill="#2a2a78" opacity="0.85"/>
<rect x="713.5" y="682.5" width="3.5" height="1" fill="#2a2a78" opacity="0.85"/>
<rect x="860" y="682.5" width="4" height="1" fill="#2a2a78" opacity="0.85"/>
<rect x="564" y="409" width="15" height="1" fill="#000"/><rect x="571" y="402" width="1" height="16" fill="#000"/>
</svg>
</body></html>
